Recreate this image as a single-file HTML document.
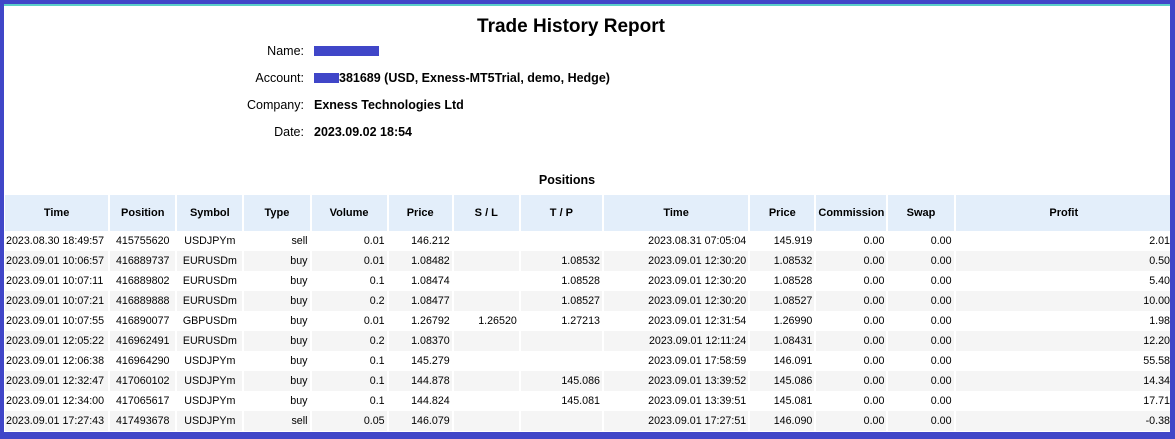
<!DOCTYPE html>
<html><head><meta charset="utf-8"><style>
html,body{margin:0;padding:0;}
body{width:1175px;height:439px;background:#4046c8;position:relative;overflow:hidden;font-family:"Liberation Sans",sans-serif;color:#000;}
.page{position:absolute;left:4px;top:4px;width:1166px;height:428px;background:#fff;border-top:2px solid #5ccfc8;box-sizing:border-box;overflow:hidden;}
.title{position:absolute;left:0;width:1134px;text-align:center;top:10px;font-size:19px;font-weight:bold;}
.lbl{position:absolute;right:866px;font-size:12.5px;}
.val{position:absolute;left:310px;font-size:12.5px;font-weight:bold;}
.bar{display:inline-block;background:#4046c8;height:10px;vertical-align:-1px;}
.pos{position:absolute;left:0;width:1126px;text-align:center;top:167px;font-size:12.5px;font-weight:bold;}
table{position:absolute;left:-1px;top:189px;border-collapse:separate;border-spacing:2px 0;table-layout:fixed;width:1171px;font-size:10.7px;}
th{background:#e3eefa;height:36px;font-weight:bold;padding:0;text-align:center;font-size:11px;}
td{height:20px;padding:0 2px;text-align:right;white-space:nowrap;overflow:hidden;}
td.l{text-align:left;padding-left:1px;}
td.c{text-align:center;}
tr.g td{background:#f5f5f5;}
</style></head><body>
<div class="page">
<div class="title">Trade History Report</div>
<div class="lbl" style="top:38px">Name:</div><div class="val" style="top:38px"><span class="bar" style="width:65px"></span></div>
<div class="lbl" style="top:65px">Account:</div><div class="val" style="top:65px"><span class="bar" style="width:25px"></span>381689 (USD, Exness-MT5Trial, demo, Hedge)</div>
<div class="lbl" style="top:92px">Company:</div><div class="val" style="top:92px">Exness Technologies Ltd</div>
<div class="lbl" style="top:119px">Date:</div><div class="val" style="top:119px">2023.09.02 18:54</div>
<div class="pos">Positions</div>
<table>
<colgroup><col style="width:103px"><col style="width:65px"><col style="width:65px"><col style="width:65px"><col style="width:75px"><col style="width:63px"><col style="width:65px"><col style="width:81px"><col style="width:144px"><col style="width:64px"><col style="width:70px"><col style="width:65px"><col style="width:216px"></colgroup>
<tr><th>Time</th><th>Position</th><th>Symbol</th><th>Type</th><th>Volume</th><th>Price</th><th>S / L</th><th>T / P</th><th>Time</th><th>Price</th><th>Commission</th><th>Swap</th><th>Profit</th></tr>
<tr><td class="l">2023.08.30 18:49:57</td><td class="c">415755620</td><td class="c">USDJPYm</td><td>sell</td><td>0.01</td><td>146.212</td><td></td><td></td><td>2023.08.31 07:05:04</td><td>145.919</td><td>0.00</td><td>0.00</td><td>2.01</td></tr>
<tr class="g"><td class="l">2023.09.01 10:06:57</td><td class="c">416889737</td><td class="c">EURUSDm</td><td>buy</td><td>0.01</td><td>1.08482</td><td></td><td>1.08532</td><td>2023.09.01 12:30:20</td><td>1.08532</td><td>0.00</td><td>0.00</td><td>0.50</td></tr>
<tr><td class="l">2023.09.01 10:07:11</td><td class="c">416889802</td><td class="c">EURUSDm</td><td>buy</td><td>0.1</td><td>1.08474</td><td></td><td>1.08528</td><td>2023.09.01 12:30:20</td><td>1.08528</td><td>0.00</td><td>0.00</td><td>5.40</td></tr>
<tr class="g"><td class="l">2023.09.01 10:07:21</td><td class="c">416889888</td><td class="c">EURUSDm</td><td>buy</td><td>0.2</td><td>1.08477</td><td></td><td>1.08527</td><td>2023.09.01 12:30:20</td><td>1.08527</td><td>0.00</td><td>0.00</td><td>10.00</td></tr>
<tr><td class="l">2023.09.01 10:07:55</td><td class="c">416890077</td><td class="c">GBPUSDm</td><td>buy</td><td>0.01</td><td>1.26792</td><td>1.26520</td><td>1.27213</td><td>2023.09.01 12:31:54</td><td>1.26990</td><td>0.00</td><td>0.00</td><td>1.98</td></tr>
<tr class="g"><td class="l">2023.09.01 12:05:22</td><td class="c">416962491</td><td class="c">EURUSDm</td><td>buy</td><td>0.2</td><td>1.08370</td><td></td><td></td><td>2023.09.01 12:11:24</td><td>1.08431</td><td>0.00</td><td>0.00</td><td>12.20</td></tr>
<tr><td class="l">2023.09.01 12:06:38</td><td class="c">416964290</td><td class="c">USDJPYm</td><td>buy</td><td>0.1</td><td>145.279</td><td></td><td></td><td>2023.09.01 17:58:59</td><td>146.091</td><td>0.00</td><td>0.00</td><td>55.58</td></tr>
<tr class="g"><td class="l">2023.09.01 12:32:47</td><td class="c">417060102</td><td class="c">USDJPYm</td><td>buy</td><td>0.1</td><td>144.878</td><td></td><td>145.086</td><td>2023.09.01 13:39:52</td><td>145.086</td><td>0.00</td><td>0.00</td><td>14.34</td></tr>
<tr><td class="l">2023.09.01 12:34:00</td><td class="c">417065617</td><td class="c">USDJPYm</td><td>buy</td><td>0.1</td><td>144.824</td><td></td><td>145.081</td><td>2023.09.01 13:39:51</td><td>145.081</td><td>0.00</td><td>0.00</td><td>17.71</td></tr>
<tr class="g"><td class="l">2023.09.01 17:27:43</td><td class="c">417493678</td><td class="c">USDJPYm</td><td>sell</td><td>0.05</td><td>146.079</td><td></td><td></td><td>2023.09.01 17:27:51</td><td>146.090</td><td>0.00</td><td>0.00</td><td>-0.38</td></tr>
</table>
</div>
</body></html>
